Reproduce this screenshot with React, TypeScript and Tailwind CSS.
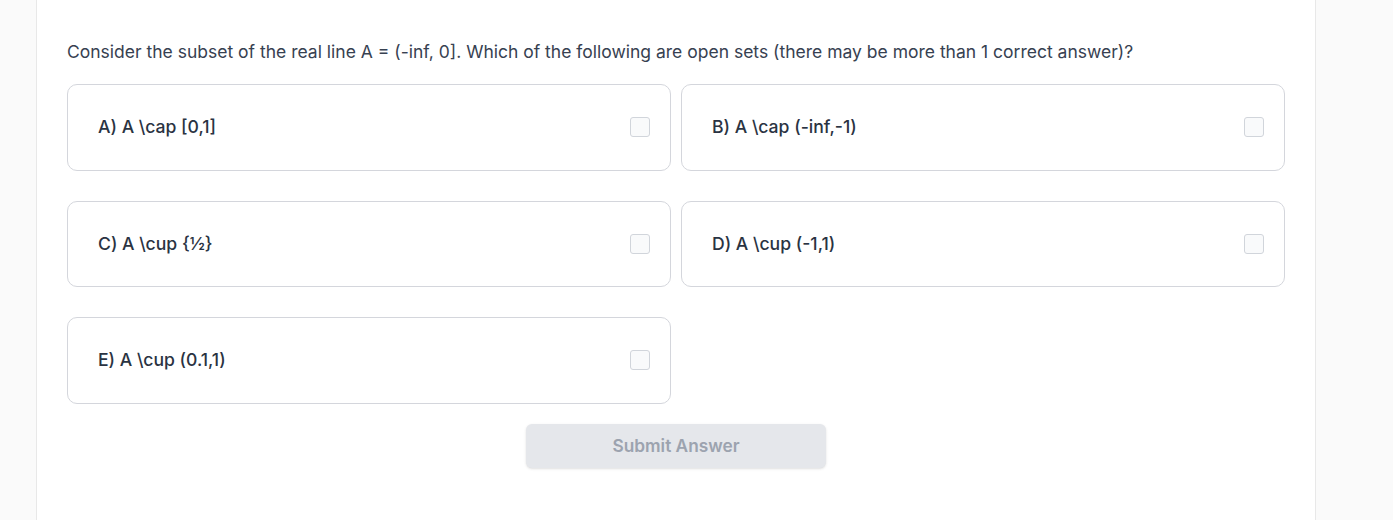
import React from "react";

const options = [
  "A) A \\cap [0,1]",
  "B) A \\cap (-inf,-1)",
  "C) A \\cup {½}",
  "D) A \\cup (-1,1)",
  "E) A \\cup (0.1,1)",
];

export default function App() {
  return (
    <div
      className="w-[1393px] h-[520px] bg-[#fafafa] flex"
      style={{ fontFamily: "Inter, 'Noto Sans', sans-serif" }}
    >
      <div className="ml-[36px] w-[1280px] h-full bg-white border-x border-[#e8e8e8] px-[30px] pt-10">
        <p className="text-[17.5px] leading-6 text-[#374151] mb-5">
          Consider the subset of the real line A = (-inf, 0]. Which of the following are open sets (there may be more than 1 correct answer)?
        </p>
        <div className="grid grid-cols-2 gap-x-[10px] gap-y-[30px]">
          {options.map((o) => (
            <label
              key={o}
              className="h-[86.5px] flex items-center justify-between rounded-[10px] border border-[#d4d6dc] bg-white pl-[30px] pr-5 cursor-pointer"
            >
              <span className="text-[17.6px] font-medium text-[#2a3342]">{o}</span>
              <span className="w-5 h-5 rounded-[3px] border border-[#d1d5db] bg-[#f9fafb]" />
            </label>
          ))}
        </div>
        <div className="flex justify-center mt-5">
          <button
            disabled
            className="w-[300px] h-[44px] rounded-md bg-[#e5e7eb] text-[#9ca3af] text-[17.3px] font-semibold shadow-sm"
          >
            Submit Answer
          </button>
        </div>
      </div>
    </div>
  );
}
